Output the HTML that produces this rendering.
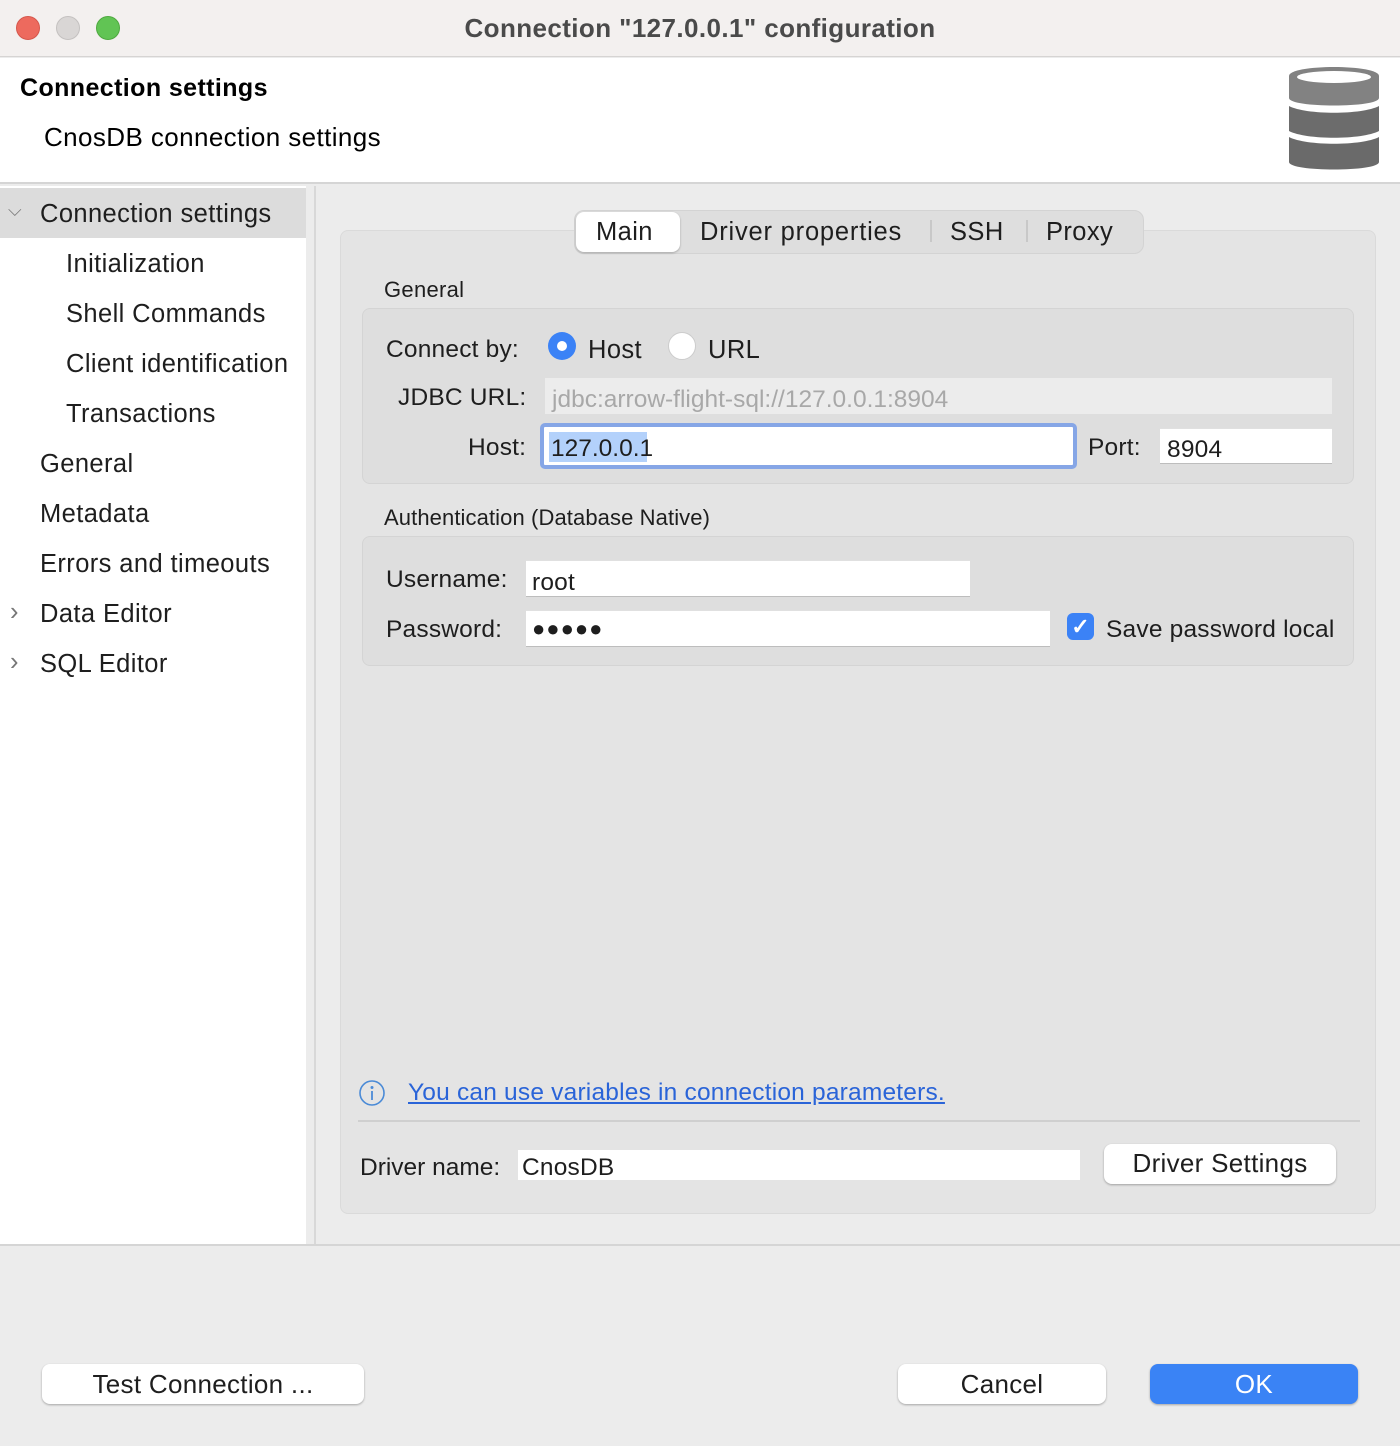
<!DOCTYPE html>
<html><head><meta charset="utf-8"><style>
*{margin:0;padding:0;box-sizing:border-box}
body{width:1400px;height:1446px;position:relative;background:#ececec;font-family:"Liberation Sans",sans-serif;color:#1e1e1e;overflow:hidden}
.a{position:absolute;white-space:nowrap}
.t{font-size:25.5px;letter-spacing:0.4px}
.f{font-size:24.5px;letter-spacing:0.2px}
.in{position:absolute;background:#fff;border-bottom:1px solid #bdbdbd;border-top:1px solid #e0e0e0}
.btn{position:absolute;background:#fff;border-radius:8px;box-shadow:0 1px 2px rgba(0,0,0,.3);font-size:26px;letter-spacing:0.3px;text-align:center}
</style></head><body>
<div class="a" style="left:0;top:0;width:1400px;height:57px;background:#f3f0ef;border-bottom:1px solid #d6d4d3"></div>
<div class="a" style="left:16px;top:16px;width:24px;height:24px;border-radius:50%;background:#ed6a5e;border:1px solid #d5574c"></div>
<div class="a" style="left:56px;top:16px;width:24px;height:24px;border-radius:50%;background:#d9d6d5;border:1px solid #c4c1c0"></div>
<div class="a" style="left:96px;top:16px;width:24px;height:24px;border-radius:50%;background:#61c454;border:1px solid #4ea93f"></div>
<div class="a" style="left:0;width:1400px;top:13px;text-align:center;font-size:26px;letter-spacing:0.4px;font-weight:bold;color:#4a4a4a">Connection "127.0.0.1" configuration</div>
<div class="a" style="left:0;top:58px;width:1400px;height:126px;background:#fff;border-bottom:2px solid #d5d5d5"></div>
<div class="a" style="left:20px;top:74px;font-size:25px;letter-spacing:0.4px;font-weight:bold;color:#000">Connection settings</div>
<div class="a" style="left:44px;top:122px;font-size:26px;letter-spacing:0.4px;color:#000">CnosDB connection settings</div>
<svg class="a" style="left:1286px;top:64px" width="96" height="108" viewBox="0 0 96 108">
<path d="M3 12 C3 0 93 0 93 12 V34 C93 44 3 44 3 34Z" fill="#828282"/>
<ellipse cx="48" cy="13" rx="37" ry="6" fill="#fff"/>
<path d="M3 42 C20 51 76 51 93 42 V67 C76 76 20 76 3 67Z" fill="#6c6c6c"/>
<path d="M3 73 C20 82 76 82 93 73 V98 C93 108 3 108 3 98Z" fill="#6a6a6a"/>
</svg>
<div class="a" style="left:0;top:186px;width:306px;height:1058px;background:#fff"></div>
<div class="a" style="left:306px;top:186px;width:10px;height:1058px;background:#ececec;border-right:2px solid #d8d8d8"></div>
<div class="a" style="left:0;top:188px;width:306px;height:50px;background:#dcdcdc"></div>
<div class="a" style="left:8px;top:200px;color:#777;font-size:18px">⌵</div>
<div class="a t" style="left:40px;top:200px">Connection settings</div>
<div class="a t" style="left:66px;top:250px">Initialization</div>
<div class="a t" style="left:66px;top:300px">Shell Commands</div>
<div class="a t" style="left:66px;top:350px">Client identification</div>
<div class="a t" style="left:66px;top:400px">Transactions</div>
<div class="a t" style="left:40px;top:450px">General</div>
<div class="a t" style="left:40px;top:500px">Metadata</div>
<div class="a t" style="left:40px;top:550px">Errors and timeouts</div>
<div class="a t" style="left:10px;top:598px;color:#777">›</div>
<div class="a t" style="left:40px;top:600px">Data Editor</div>
<div class="a t" style="left:10px;top:648px;color:#777">›</div>
<div class="a t" style="left:40px;top:650px">SQL Editor</div>
<div class="a" style="left:340px;top:230px;width:1036px;height:984px;background:#e4e4e4;border:1px solid #dadada;border-radius:8px"></div>
<div class="a" style="left:574px;top:210px;width:570px;height:44px;background:#dedede;border:1px solid #d3d3d3;border-radius:10px"></div>
<div class="a" style="left:576px;top:212px;width:104px;height:40px;background:#fff;border-radius:8px;box-shadow:0 1px 2px rgba(0,0,0,.25)"></div>
<div class="a t" style="left:596px;top:218px">Main</div>
<div class="a t" style="left:700px;top:218px;letter-spacing:0.8px">Driver properties</div>
<div class="a" style="left:930px;top:220px;width:2px;height:22px;background:#c8c8c8"></div>
<div class="a t" style="left:950px;top:218px">SSH</div>
<div class="a" style="left:1026px;top:220px;width:2px;height:22px;background:#c8c8c8"></div>
<div class="a t" style="left:1046px;top:218px">Proxy</div>
<div class="a" style="left:384px;top:277px;font-size:22px;letter-spacing:0.3px">General</div>
<div class="a" style="left:362px;top:308px;width:992px;height:176px;background:#dedede;border:1px solid #d4d4d4;border-radius:8px"></div>
<div class="a f" style="left:386px;top:336px">Connect by:</div>
<div class="a" style="left:548px;top:332px;width:28px;height:28px;border-radius:50%;background:#3b82f6"></div>
<div class="a" style="left:557px;top:341px;width:10px;height:10px;border-radius:50%;background:#fff"></div>
<div class="a t" style="left:588px;top:336px">Host</div>
<div class="a" style="left:668px;top:332px;width:28px;height:28px;border-radius:50%;background:#fff;border:1px solid #ccc"></div>
<div class="a t" style="left:708px;top:336px">URL</div>
<div class="a f" style="left:398px;top:384px">JDBC URL:</div>
<div class="a" style="left:545px;top:378px;width:787px;height:36px;background:#ececec"></div>
<div class="a f" style="left:552px;top:386px;color:#a8a8a8;letter-spacing:0">jdbc:arrow-flight-sql://127.0.0.1:8904</div>
<div class="a f" style="left:468px;top:434px">Host:</div>
<div class="a" style="left:540px;top:423px;width:537px;height:46px;border:4px solid #86a6e6;border-radius:5px;background:#fff"></div>
<div class="a" style="left:549px;top:432px;width:98px;height:30px;background:#b3d1fb"></div>
<div class="a f" style="left:551px;top:435px;letter-spacing:0">127.0.0.1</div>
<div class="a f" style="left:1088px;top:434px">Port:</div>
<div class="in" style="left:1160px;top:428px;width:172px;height:36px"></div>
<div class="a f" style="left:1167px;top:436px">8904</div>
<div class="a" style="left:384px;top:505px;font-size:22px;letter-spacing:0.1px">Authentication (Database Native)</div>
<div class="a" style="left:362px;top:536px;width:992px;height:130px;background:#dedede;border:1px solid #d4d4d4;border-radius:8px"></div>
<div class="a f" style="left:386px;top:566px">Username:</div>
<div class="in" style="left:526px;top:560px;width:444px;height:37px"></div>
<div class="a f" style="left:532px;top:569px">root</div>
<div class="a f" style="left:386px;top:616px">Password:</div>
<div class="in" style="left:526px;top:610px;width:524px;height:37px"></div>
<div class="a" style="left:532px;top:616px;font-size:22px;letter-spacing:1px">●●●●●</div>
<div class="a" style="left:1067px;top:613px;width:27px;height:27px;border-radius:6px;background:#3b82f6;color:#fff;font-size:22px;text-align:center;line-height:27px;font-weight:bold">✓</div>
<div class="a f" style="left:1106px;top:616px;width:228px;overflow:hidden">Save password locally</div>
<svg class="a" style="left:358px;top:1079px" width="28" height="28"><circle cx="14" cy="14" r="12" fill="none" stroke="#4a8ad6" stroke-width="1.6"/><circle cx="14" cy="8.5" r="1.5" fill="#4a8ad6"/><path d="M14 12v9" stroke="#4a8ad6" stroke-width="1.8"/></svg>
<div class="a f" style="left:408px;top:1079px;color:#2a64d8;text-decoration:underline">You can use variables in connection parameters.</div>
<div class="a" style="left:358px;top:1120px;width:1002px;height:2px;background:#cfcfcf"></div>
<div class="a f" style="left:360px;top:1154px;letter-spacing:0">Driver name:</div>
<div class="a" style="left:518px;top:1150px;width:562px;height:30px;background:#fff"></div>
<div class="a f" style="left:522px;top:1154px">CnosDB</div>
<div class="btn" style="left:1104px;top:1144px;width:232px;height:40px;line-height:38px">Driver Settings</div>
<div class="a" style="left:0;top:1244px;width:1400px;height:2px;background:#d5d5d5"></div>
<div class="btn" style="left:42px;top:1364px;width:322px;height:40px;line-height:40px">Test Connection ...</div>
<div class="btn" style="left:898px;top:1364px;width:208px;height:40px;line-height:40px">Cancel</div>
<div class="btn" style="left:1150px;top:1364px;width:208px;height:40px;line-height:40px;background:#3a83f5;color:#fff">OK</div>
</body></html>
